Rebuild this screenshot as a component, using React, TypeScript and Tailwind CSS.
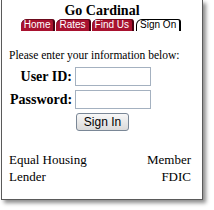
const TABS = ["Home", "Rates", "Find Us"];

function Tab({ label, active }: { label: string; active?: boolean }) {
  if (active) {
    return (
      <div className="flex h-[12px] items-center rounded-tl-[6px] rounded-tr-[3px] border-t border-l border-r-2 border-black bg-white px-[3px] pb-px font-['Liberation_Sans',Arial,sans-serif] text-[10px] leading-none text-black">
        {label}
      </div>
    );
  }
  return (
    <div className="flex h-[12px] items-center rounded-tl-[6px] rounded-tr-[3px] border-r-2 border-[#4a0010] bg-[#a8122f] px-[3px] pb-px font-['Liberation_Sans',Arial,sans-serif] text-[10px] leading-none text-white shadow-[inset_0_1px_0_#6b0a1c]">
      {label}
    </div>
  );
}

export default function App() {
  return (
    <div className="h-[210px] w-[214px] overflow-hidden bg-white">
      <div className="ml-px flex h-[200px] w-[202px] flex-col border-x border-b border-[#5a5a5a] bg-white font-['Liberation_Serif','Times_New_Roman',serif] text-black shadow-[3px_3px_4px_rgba(0,0,0,0.45)]">
        {/* Header */}
        <div className="pt-[3px] text-center text-[14px] font-bold leading-[16px]">
          Go Cardinal
        </div>
        <div className="flex justify-center gap-px pr-[2px]">
          {TABS.map((t) => (
            <Tab key={t} label={t} />
          ))}
          <div className="ml-px">
            <Tab label="Sign On" active />
          </div>
        </div>

        {/* Form */}
        <div className="mt-[17px] pl-[7px] text-[11.5px] leading-[14px]">
          Please enter your information below:
        </div>
        <div className="mt-[5px] flex flex-col gap-[4px] pl-[8px]">
          <div className="flex items-center gap-[3px]">
            <div className="w-[62px] text-right text-[14px] font-bold leading-none">User ID:</div>
            <input className="h-[19px] w-[76px] border border-[#a4b1c0] bg-white outline-none" />
          </div>
          <div className="flex items-center gap-[3px]">
            <div className="w-[62px] text-right text-[14px] font-bold leading-none">Password:</div>
            <input type="password" className="h-[19px] w-[76px] border border-[#a4b1c0] bg-white outline-none" />
          </div>
          <div className="flex pl-[66px]">
            <button className="flex h-[18px] w-[53px] items-center justify-center rounded-[3px] border border-[#7a8796] bg-gradient-to-b from-[#f8f8f8] to-[#dadada] font-['Liberation_Sans',Arial,sans-serif] text-[12px] leading-none text-black">
              Sign In
            </button>
          </div>
        </div>

        {/* Footer */}
        <div className="mt-[20px] flex justify-between pl-[7px] pr-[11px] text-[13px] leading-[17px]">
          <div>
            <div>Equal Housing</div>
            <div>Lender</div>
          </div>
          <div className="text-right">
            <div>Member</div>
            <div>FDIC</div>
          </div>
        </div>
      </div>
    </div>
  );
}
